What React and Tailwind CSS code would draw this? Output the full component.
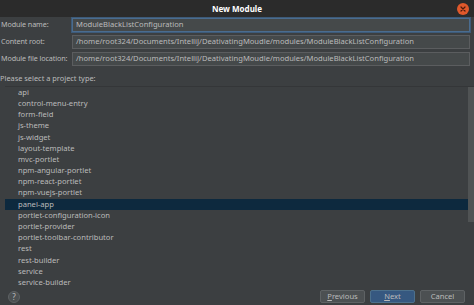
const items = [
  'api',
  'control-menu-entry',
  'form-field',
  'js-theme',
  'js-widget',
  'layout-template',
  'mvc-portlet',
  'npm-angular-portlet',
  'npm-react-portlet',
  'npm-vuejs-portlet',
  'panel-app',
  'portlet-configuration-icon',
  'portlet-provider',
  'portlet-toolbar-contributor',
  'rest',
  'rest-builder',
  'service',
  'service-builder',
]

const path = '/home/root324/Documents/IntelliJ/DeativatingMoudle/modules/ModuleBlackListConfiguration'

function Field({ label, value, focused }) {
  return (
    <div className="flex items-center">
      <span className="w-[71px] shrink-0 whitespace-nowrap text-[7.2px] tracking-[-0.1px]">{label}</span>
      <div
        className={`flex-1 h-[14px] flex items-center px-[3px] bg-[#45494a] border ${
          focused ? 'border-[#4a6c8f] ring-1 ring-[#3d5a78]' : 'border-[#5b5d5f]'
        }`}
      >
        <span className="whitespace-nowrap">{value}</span>
      </div>
    </div>
  )
}

export default function App() {
  return (
    <div
      className="w-[474px] h-[305px] bg-[#3c3f41] text-[#bbbbbb] flex flex-col overflow-hidden text-[7.6px] leading-none"
      style={{ fontFamily: '"Noto Sans", "DejaVu Sans", sans-serif' }}
    >
      {/* Title bar */}
      <div className="relative h-[17px] shrink-0 bg-[#2b2b2b] flex items-center justify-center">
        <span className="text-white font-bold text-[8px]">New Module</span>
        <div className="absolute right-[5px] top-[3px] w-[12px] h-[12px] rounded-full bg-[#e0582b] flex items-center justify-center">
          <svg width="6" height="6" viewBox="0 0 6 6">
            <path d="M1 1 L5 5 M5 1 L1 5" stroke="#4a1a0c" strokeWidth="1.2" strokeLinecap="round" />
          </svg>
        </div>
      </div>

      {/* Form */}
      <div className="flex flex-col gap-[3px] pt-[1px] pr-[4px] pl-px">
        <Field label="Module name:" value="ModuleBlackListConfiguration" focused />
        <Field label="Content root:" value={path} />
        <Field label="Module file location:" value={path} />
      </div>

      <div className="h-[20px] shrink-0 flex items-center pt-[6px] text-[7.4px]">Please select a project type:</div>

      {/* List */}
      <div className="flex-1 min-h-0 flex border-t border-[#343638] ml-[5px]">
        <div className="flex-1 overflow-hidden">
          {items.map(item => (
            <div
              key={item}
              className={`h-[11.2px] flex items-center pl-[13px] ${item === 'panel-app' ? 'bg-[#0d293e]' : ''}`}
            >
              {item}
            </div>
          ))}
        </div>
        <div className="w-[6px] shrink-0">
          <div className="h-[135px] bg-[#505354]" />
        </div>
      </div>

      {/* Footer */}
      <div className="h-[17px] shrink-0 flex items-center pl-[8px] pr-[9px]">
        <div className="w-[12px] h-[12px] rounded-full bg-[#4c5052] border border-[#5e6264] flex items-center justify-center text-[8px]">
          ?
        </div>
        <div className="flex-1" />
        <div className="flex gap-[5px]">
          <button className="w-[45px] h-[13px] bg-[#4c5052] border border-[#5e6264] rounded-[2px] text-[#bbbbbb]">
            <span className="underline">P</span>revious
          </button>
          <button className="w-[45px] h-[13px] bg-[#365880] border border-[#4c708c] rounded-[2px] text-[#bbbbbb]">
            <span className="underline">N</span>ext
          </button>
          <button className="w-[45px] h-[13px] bg-[#4c5052] border border-[#5e6264] rounded-[2px] text-[#bbbbbb]">
            Cancel
          </button>
        </div>
      </div>
    </div>
  )
}
